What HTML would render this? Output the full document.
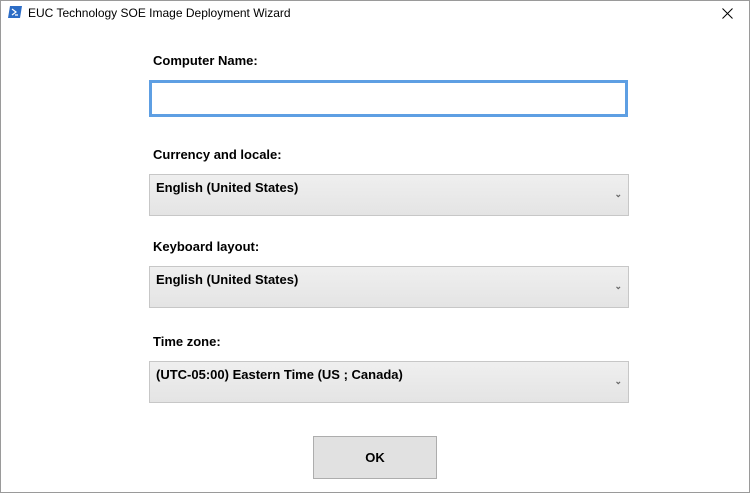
<!DOCTYPE html><html><head><style>
body{margin:0;width:750px;height:493px;position:relative;background:#fff;font-family:"Liberation Sans",sans-serif;overflow:hidden}
.win{position:absolute;left:0;top:0;width:748px;height:491px;border:1px solid #9a9a9a}
.t{position:absolute;left:27px;top:5px;font-size:12px;color:#000}
.l{position:absolute;left:153px;font-size:13px;font-weight:bold;color:#000}
.box{position:absolute;left:149px;top:80px;width:473px;height:31px;border:3px solid #5e9fe3;background:#fff}
.c{position:absolute;left:149px;width:478px;height:40px;border:1px solid #c7c7c7;background:linear-gradient(#efefef,#e4e4e4);font-size:13px;font-weight:bold}
.c span{position:absolute;left:6px;top:5px}
.c i{position:absolute;right:6px;top:14px;font-style:normal;font-size:9px;color:#666}
.ok{position:absolute;left:313px;top:436px;width:122px;height:41px;border:1px solid #adadad;background:#e1e1e1;font-size:13px;font-weight:bold;text-align:center;line-height:41px}
</style></head><body><div class="win">
<svg style="position:absolute;left:7px;top:5px" width="14" height="12"><polygon points="2,0 14,0 12,12 0,12" fill="#2d6dc6"/><path d="M4,3 L8,6 L4,9 M7,9 H10" stroke="#fff" stroke-width="1.2" fill="none"/></svg>
<div class="t">EUC Technology SOE Image Deployment Wizard</div>
<svg style="position:absolute;left:721px;top:7px" width="11" height="11"><path d="M0.5,0.5 L10.5,10.5 M10.5,0.5 L0.5,10.5" stroke="#000" stroke-width="1"/></svg>
</div>
<div class="l" style="top:53px">Computer Name:</div>
<div class="box"></div>
<div class="l" style="top:147px">Currency and locale:</div>
<div class="c" style="top:174px"><span>English (United States)</span><i>⌄</i></div>
<div class="l" style="top:239px">Keyboard layout:</div>
<div class="c" style="top:266px"><span>English (United States)</span><i>⌄</i></div>
<div class="l" style="top:334px">Time zone:</div>
<div class="c" style="top:361px"><span>(UTC-05:00) Eastern Time (US ; Canada)</span><i>⌄</i></div>
<div class="ok">OK</div>
</body></html>
